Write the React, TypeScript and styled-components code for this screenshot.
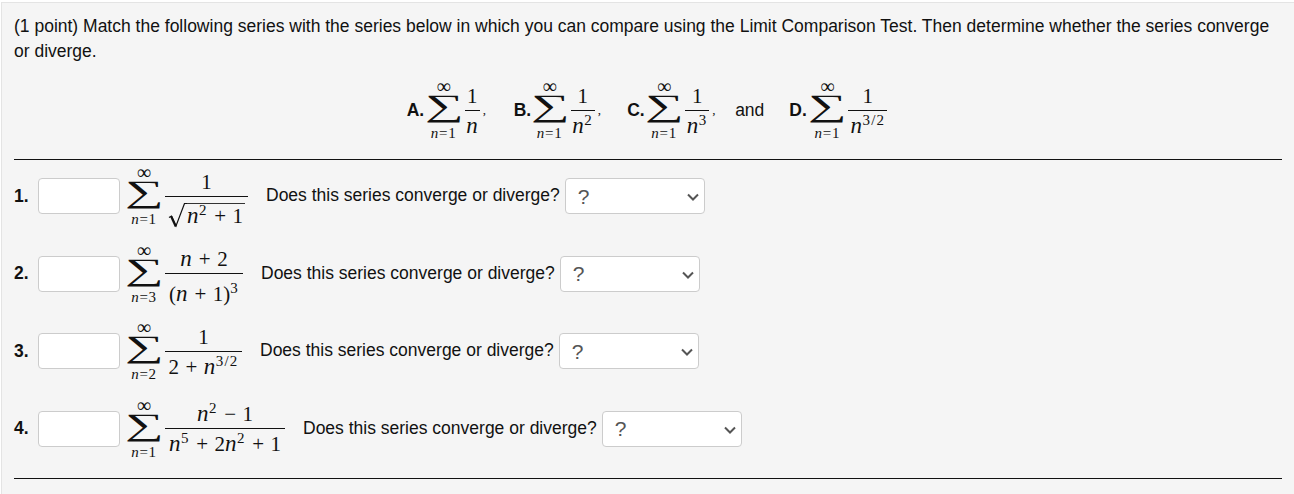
import React from "react";
import styled, { createGlobalStyle } from "styled-components";

const GlobalStyle = createGlobalStyle`
  html, body {
    margin: 0;
    padding: 0;
    background: #ffffff;
  }
  body {
    font-family: "Liberation Sans", Arial, sans-serif;
    color: #111111;
  }
`;

const Panel = styled.div`
  box-sizing: border-box;
  width: 1293px;
  height: 492px;
  margin: 2px 0 0 1px;
  padding: 11px 12px 0 12px;
  background: #f5f5f5;
  border-top: 1px solid #e4e4e4;
  border-left: 1px solid #e4e4e4;
`;

const Intro = styled.p`
  margin: 0;
  font-size: 17.5px;
  line-height: 25px;
`;

const Choices = styled.div`
  display: flex;
  align-items: center;
  justify-content: center;
  height: 92px;
  margin-bottom: 3px;
  padding-right: 2px;
  font-size: 17.5px;
`;

const Choice = styled.div<{ $gap: number }>`
  display: flex;
  align-items: center;
  margin-right: ${(p) => p.$gap}px;
`;

const Label = styled.span<{ $width: number }>`
  width: ${(p) => p.$width}px;
  flex: none;
  font-size: 17.5px;
  font-weight: 700;
`;

const Rule = styled.hr`
  margin: 0;
  height: 1px;
  border: 0;
  background: #111111;
`;

const Rows = styled.div`
  padding-top: 18px;
`;

const Row = styled.div`
  display: flex;
  align-items: center;
  height: 36px;
  margin-bottom: 41.5px;

  &:last-child {
    margin-bottom: 31px;
  }
`;

const AnswerInput = styled.input`
  box-sizing: border-box;
  flex: none;
  width: 82px;
  height: 36px;
  margin-right: 10px;
  border: 1px solid #cccccc;
  border-radius: 4px;
  background: #ffffff;
`;

const Sum = styled.span`
  display: flex;
  flex: none;
  flex-direction: column;
  align-items: center;
  width: 28px;
  margin-right: 7px;
  font-family: "Liberation Serif", serif;
`;

const InfinitySign = styled.span`
  height: 10px;
  font-size: 20px;
  line-height: 10px;
`;

const Sigma = styled.span`
  height: 30px;
  font-size: 31px;
  line-height: 30px;
  transform: scaleX(1.75);
`;

const Lower = styled.span`
  height: 12px;
  margin-top: 6px;
  font-size: 15px;
  letter-spacing: 0.7px;
  line-height: 12px;
  white-space: nowrap;
`;

const Frac = styled.span<{ $width: number }>`
  display: flex;
  flex: none;
  flex-direction: column;
  align-items: center;
  width: ${(p) => p.$width}px;
  font-family: "Liberation Serif", serif;
  font-size: 21px;
`;

const Num = styled.span`
  display: block;
  width: 100%;
  height: 24px;
  border-bottom: 1px solid #111111;
  line-height: 20px;
  text-align: center;
  white-space: nowrap;
`;

const Den = styled.span<{ $tall?: boolean }>`
  display: block;
  height: 24px;
  line-height: ${(p) => (p.$tall ? 40 : 30)}px;
  white-space: nowrap;
`;

const RootDen = styled.span`
  display: flex;
  height: 24px;
  padding-top: 6px;
  box-sizing: border-box;
`;

const Radicand = styled.span`
  height: 24px;
  padding-right: 2px;
  border-top: 1px solid #333333;
  line-height: 24px;
  white-space: nowrap;
`;

const RadicalSign = styled.svg`
  flex: none;
  width: 19px;
  height: 25px;
`;

const Variable = styled.i`
  font-size: 23px;
  letter-spacing: 0.5px;
`;

const Op = styled.span`
  margin: 0 6.5px;
`;

const Sup = styled.sup`
  font-size: 15px;
  letter-spacing: 1.2px;
  line-height: 0;
  vertical-align: 8px;
`;

const Comma = styled.span`
  width: 7px;
  margin-left: 3px;
  font-family: "Liberation Serif", serif;
  font-size: 13px;
`;

const Question = styled.span`
  flex: none;
  margin-left: 18px;
  margin-right: 5px;
  margin-bottom: 1px;
  font-size: 17.5px;
`;

const SelectWrap = styled.span`
  position: relative;
  display: block;
  flex: none;
  width: 140px;
  height: 36px;
`;

const Select = styled.select`
  box-sizing: border-box;
  width: 100%;
  height: 100%;
  padding: 0 12px;
  border: 1px solid #cccccc;
  border-radius: 4px;
  background: #ffffff;
  color: #555555;
  font-family: "Liberation Sans", Arial, sans-serif;
  font-size: 21px;
  appearance: none;
`;

const Chevron = styled.svg`
  position: absolute;
  top: 15px;
  right: 6px;
  width: 12px;
  height: 8px;
  pointer-events: none;
`;

const N = () => <Variable>n</Variable>;

const SumSign = ({ from }: { from: number }) => (
  <Sum>
    <InfinitySign>∞</InfinitySign>
    <Sigma>∑</Sigma>
    <Lower>
      <i>n</i>={from}
    </Lower>
  </Sum>
);

const Radical = () => (
  <RadicalSign viewBox="0 0 19 25">
    <path d="M1 14.5 3.5 13 8 23 16.5 0.5H19" fill="none" stroke="#111111" strokeWidth="1.2" />
    <path d="M3.2 13.5 7.8 23.5" fill="none" stroke="#111111" strokeWidth="2.2" />
  </RadicalSign>
);

const choices = [
  { label: "A.", labelWidth: 23, den: <N />, width: 15, gap: 24 },
  { label: "B.", labelWidth: 22, den: <><N /><Sup>2</Sup></>, width: 24, gap: 22.5 },
  { label: "C.", labelWidth: 23, den: <><N /><Sup>3</Sup></>, width: 24, gap: 16 },
];

const rows = [
  {
    from: 1,
    width: 83,
    num: "1",
    den: (
      <RootDen>
        <Radical />
        <Radicand>
          <N />
          <Sup>2</Sup>
          <Op>+</Op>1
        </Radicand>
      </RootDen>
    ),
  },
  {
    from: 3,
    width: 78,
    num: <><N /><Op>+</Op>2</>,
    den: <Den $tall>(<N /><Op>+</Op>1)<Sup>3</Sup></Den>,
  },
  {
    from: 2,
    width: 77,
    num: "1",
    den: <Den>2<Op>+</Op><N /><Sup>3/2</Sup></Den>,
  },
  {
    from: 1,
    width: 120,
    num: <><N /><Sup>2</Sup><Op>−</Op>1</>,
    den: <Den><N /><Sup>5</Sup><Op>+</Op>2<N /><Sup>2</Sup><Op>+</Op>1</Den>,
  },
];

export default function App() {
  return (
    <Panel>
      <GlobalStyle />
      <Intro>
        (1 point) Match the following series with the series below in which you can compare using
        the Limit Comparison Test. Then determine whether the series converge or diverge.
      </Intro>
      <Choices>
        {choices.map((c) => (
          <Choice key={c.label} $gap={c.gap}>
            <Label $width={c.labelWidth}>{c.label}</Label>
            <SumSign from={1} />
            <Frac $width={c.width}>
              <Num>1</Num>
              <Den>{c.den}</Den>
            </Frac>
            <Comma>,</Comma>
          </Choice>
        ))}
        <Choice $gap={25}>and</Choice>
        <Choice $gap={0}>
          <Label $width={24}>D.</Label>
          <SumSign from={1} />
          <Frac $width={39}>
            <Num>1</Num>
            <Den>
              <N />
              <Sup>3/2</Sup>
            </Den>
          </Frac>
        </Choice>
      </Choices>
      <Rule />
      <Rows>
        {rows.map((r, i) => (
          <Row key={i}>
            <Label $width={24}>{i + 1}.</Label>
            <AnswerInput />
            <SumSign from={r.from} />
            <Frac $width={r.width}>
              <Num>{r.num}</Num>
              {r.den}
            </Frac>
            <Question>Does this series converge or diverge?</Question>
            <SelectWrap>
              <Select defaultValue="?">
                <option>?</option>
                <option>Converges</option>
                <option>Diverges</option>
              </Select>
              <Chevron viewBox="0 0 12 8">
                <path d="M1 1.5 6 6.5l5-5" fill="none" stroke="#555555" strokeWidth="2" />
              </Chevron>
            </SelectWrap>
          </Row>
        ))}
      </Rows>
      <Rule />
    </Panel>
  );
}
